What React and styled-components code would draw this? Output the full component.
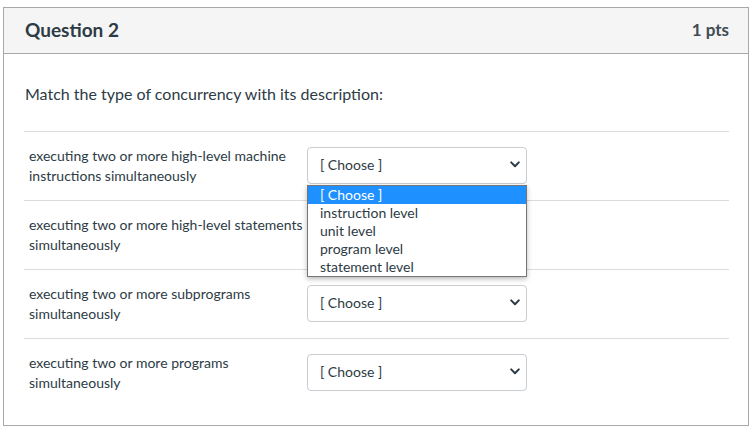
import React from "react";
import styled, { createGlobalStyle } from "styled-components";

const Global = createGlobalStyle`
  html, body { margin: 0; padding: 0; background: #fff; }
  body { font-family: Lato, "Noto Sans", "Liberation Sans", sans-serif; color: #2d3b45; }
  * { box-sizing: border-box; }
`;

const Page = styled.div`
  padding: 7px 4px 0 3px;
`;

const Card = styled.div`
  width: 746px;
  border: 1px solid #a9a9a9;
  background: #fff;
`;

const Header = styled.div`
  height: 46px;
  background: #f5f5f5;
  border-bottom: 1px solid #a9a9a9;
  display: flex;
  align-items: center;
  justify-content: space-between;
  padding: 0 19px 3px 21px;
`;

const Title = styled.div`
  font-size: 19px;
  font-weight: 700;
  color: #2d3b45;
`;

const Points = styled.div`
  font-size: 17px;
  font-weight: 700;
  color: #404b52;
`;

const Body = styled.div`
  padding: 28px 19px 18px 20px;
`;

const Prompt = styled.p`
  margin: 0 0 25px 1px;
  font-size: 16px;
  line-height: 24px;
  color: #2d3b45;
`;

const Row = styled.div`
  display: flex;
  align-items: center;
  border-top: 1px solid #dcdcdc;
  padding: 14px 0 14px 5px;
`;

const Label = styled.div`
  width: 276px;
  margin-right: 2px;
  font-size: 14px;
  line-height: 20px;
  height: 40px;
  color: #2d3b45;
`;

const SelectWrap = styled.div`
  position: relative;
  margin-top: -2px;
`;

const SelectBox = styled.div`
  width: 220px;
  height: 37px;
  border: 1px solid #c7cdd1;
  border-radius: 4px;
  background: #fff;
  display: flex;
  align-items: center;
  justify-content: space-between;
  padding: 0 6px 1px 12px;
  font-size: 14px;
  color: #2d3b45;
`;

const Chevron = styled.svg`
  width: 10px;
  height: 7px;
  display: block;
`;

const Menu = styled.div`
  position: absolute;
  left: 0;
  top: 38px;
  width: 220px;
  border: 1px solid #767676;
  background: #fff;
  box-shadow: 0 2px 5px rgba(0, 0, 0, 0.28);
  z-index: 5;
`;

const Option = styled.div`
  height: 18px;
  line-height: 17px;
  padding-left: 12px;
  font-size: 14px;
  background: ${(p) => (p.$active ? "#1e90ff" : "transparent")};
  color: ${(p) => (p.$active ? "#fff" : "#2d3b45")};
`;

const ChevronIcon = () => (
  <Chevron viewBox="0 0 10 7">
    <path d="M1.2 1.4 L5 5.2 L8.8 1.4" fill="none" stroke="#2d3b45" strokeWidth="2" strokeLinecap="round" strokeLinejoin="round" />
  </Chevron>
);

const rows = [
  ["executing two or more high-level machine", "instructions simultaneously"],
  ["executing two or more high-level statements", "simultaneously"],
  ["executing two or more subprograms", "simultaneously"],
  ["executing two or more programs", "simultaneously"],
];

const options = ["[ Choose ]", "instruction level", "unit level", "program level", "statement level"];

export default function App() {
  return (
    <Page>
      <Global />
      <Card>
        <Header>
          <Title>Question 2</Title>
          <Points>1 pts</Points>
        </Header>
        <Body>
          <Prompt>Match the type of concurrency with its description:</Prompt>
          {rows.map((r, i) => (
            <Row key={i}>
              <Label>
                {r[0]}
                <br />
                {r[1]}
              </Label>
              <SelectWrap>
                <SelectBox>
                  <span>[ Choose ]</span>
                  <ChevronIcon />
                </SelectBox>
                {i === 0 && (
                  <Menu>
                    {options.map((o, j) => (
                      <Option key={o} $active={j === 0}>
                        {o}
                      </Option>
                    ))}
                  </Menu>
                )}
              </SelectWrap>
            </Row>
          ))}
        </Body>
      </Card>
    </Page>
  );
}
